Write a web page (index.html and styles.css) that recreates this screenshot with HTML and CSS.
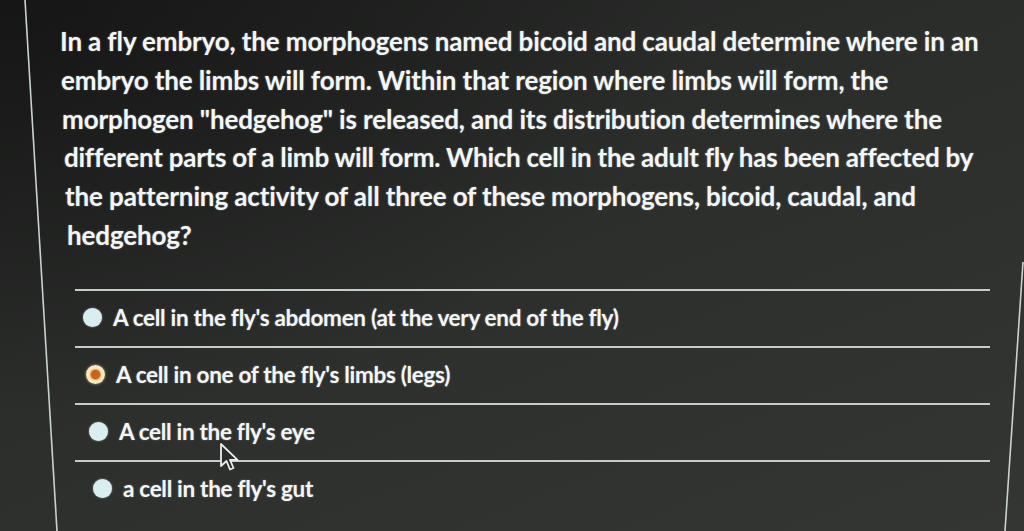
FILE: index.html
```html
<!DOCTYPE html>
<html lang="en">
<head>
<meta charset="utf-8">
<title>Quiz question</title>
<link rel="stylesheet" href="styles.css">
</head>
<body>
<div class="screen">
  <svg class="frame" width="1024" height="531" viewBox="0 0 1024 531" aria-hidden="true">
    <line x1="25" y1="0" x2="57" y2="531" stroke="#c9d2d2" stroke-width="1.6"/>
    <line x1="1023" y1="262" x2="1005" y2="531" stroke="#c9d2d2" stroke-width="1.6"/>
  </svg>
  <main class="panel">
    <p class="question"><span class="qline l1">In a fly embryo, the morphogens named bicoid and caudal determine where in an</span><span class="qline l2">embryo the limbs will form. Within that region where limbs will form, the</span><span class="qline l3">morphogen "hedgehog" is released, and its distribution determines where the</span><span class="qline l4">different parts of a limb will form. Which cell in the adult fly has been affected by</span><span class="qline l5">the patterning activity of all three of these morphogens, bicoid, caudal, and</span><span class="qline l6">hedgehog?</span></p>
    <ul class="options">
      <li class="option o1"><span class="radio"></span><span class="label">A cell in the fly's abdomen (at the very end of the fly)</span></li>
      <li class="option o2"><span class="radio selected"></span><span class="label">A cell in one of the fly's limbs (legs)</span></li>
      <li class="option o3"><span class="radio"></span><span class="label">A cell in the fly's eye</span></li>
      <li class="option o4"><span class="radio"></span><span class="label">a cell in the fly's gut</span></li>
    </ul>
  </main>
  <svg class="cursor" width="22" height="30" viewBox="0 0 22 30" aria-hidden="true">
    <path d="M2 2 L2 24 L7.5 19 L11 27.5 L14.5 26 L11 17.8 L18.5 17.8 Z" fill="#2a2c2b" stroke="#e8eeee" stroke-width="1.8" stroke-linejoin="round"/>
  </svg>
</div>
</body>
</html>
```

FILE: styles.css
```css
* { box-sizing: border-box; }

html, body {
  margin: 0;
  padding: 0;
  width: 1024px;
  height: 531px;
  overflow: hidden;
}

body {
  background: #2a2c2a;
  font-family: Lato, "Open Sans", "Liberation Sans", sans-serif;
  color: #f3f6f6;
}

.screen {
  position: relative;
  width: 1024px;
  height: 531px;
  background:
    radial-gradient(ellipse 700px 420px at 0% 0%, rgba(10,10,10,0.5), rgba(10,10,10,0) 100%),
    linear-gradient(160deg, #202120 0%, #2b2d2b 40%, #343634 100%);
}

.frame {
  position: absolute;
  left: 0;
  top: 0;
  pointer-events: none;
}

.panel {
  position: relative;
  display: flex;
  flex-direction: column;
  padding: 22px 20px 0 60px;
}

.question {
  margin: 0;
  display: flex;
  flex-direction: column;
  font-size: 26px;
  font-weight: 700;
  line-height: 38.8px;
  letter-spacing: -0.13px;
  text-shadow: 0 0 2px rgba(255,255,255,0.35);
}

.qline { white-space: nowrap; }
.l2 { padding-left: 1px; }
.l3 { padding-left: 2px; }
.l4 { padding-left: 4px; letter-spacing: -0.25px; }
.l5 { padding-left: 5px; }
.l6 { padding-left: 7px; }

.options {
  list-style: none;
  margin: 34px 0 0 15px;
  padding: 0;
  width: 915px;
}

.option {
  display: flex;
  align-items: center;
  gap: 11px;
  height: 57px;
  border-top: 2px solid #c4cccc;
  font-size: 22.5px;
  font-weight: 700;
  letter-spacing: -0.3px;
  text-shadow: 0 0 2px rgba(255,255,255,0.35);
  padding-bottom: 2px;
}

.o1 { padding-left: 8px; }
.o2 { padding-left: 11px; }
.o3 { padding-left: 14px; }
.o4 { padding-left: 18px; }

.radio {
  flex: none;
  width: 19px;
  height: 19px;
  border-radius: 50%;
  background: #d9eef1;
  box-shadow: 0 0 2px rgba(220,240,242,0.6);
}

.radio.selected {
  background: radial-gradient(circle, #c8621e 0 4px, #e0a050 5px, #f4e2b0 6px, #fbf0c8 9.5px);
  box-shadow: 0 0 3px rgba(250,220,150,0.7);
}

.label {
  white-space: nowrap;
}

.cursor {
  position: absolute;
  left: 219px;
  top: 442px;
}
```
